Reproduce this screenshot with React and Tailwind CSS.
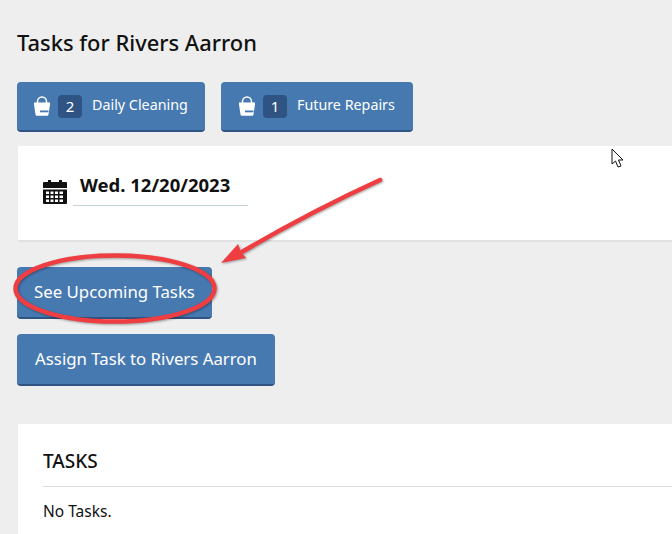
const FONT = { fontFamily: '"Noto Sans", "Open Sans", sans-serif' };

function BucketIcon() {
  return (
    <svg width="16" height="20" viewBox="0 0 16 20" className="shrink-0">
      <path d="M3.5 7V5.5a4.5 4.5 0 0 1 9 0V7" fill="none" stroke="#fff" strokeWidth="1.5" />
      <path d="M0 6.5h16v2l-1.5 10a1.5 1.5 0 0 1-1.5 1.3H3a1.5 1.5 0 0 1-1.5-1.3L0 8.5z" fill="#fff" />
      <rect x="6" y="14.5" width="8.5" height="1.8" fill="#4779b1" />
    </svg>
  );
}

function CalendarIcon() {
  return (
    <svg width="24" height="25" viewBox="0 0 24 25" className="shrink-0">
      <path d="M1 3h4V1h3v2h8V1h3v2h4a1 1 0 0 1 1 1v5H0V4a1 1 0 0 1 1-1z" fill="#111" />
      <path fillRule="evenodd" d="M0 10.5h24V24a1 1 0 0 1-1 1H1a1 1 0 0 1-1-1z
        M3 12.5v2.5h3v-2.5z M7.5 12.5v2.5h3v-2.5z M12 12.5v2.5h3v-2.5z M16.5 12.5v2.5h3.5v-2.5z
        M3 16.5v2.5h3v-2.5z M7.5 16.5v2.5h3v-2.5z M12 16.5v2.5h3v-2.5z M16.5 16.5v2.5h3.5v-2.5z
        M3 20.5v2.5h3v-2.5z M7.5 20.5v2.5h3v-2.5z M12 20.5v2.5h3v-2.5z M16.5 20.5v2.5h3.5v-2.5z" fill="#111" />
    </svg>
  );
}

function CategoryButton({ count, label, className }) {
  return (
    <button className={"flex h-[50px] items-center rounded border-b-2 border-[#2f5382] bg-[#4779b1] text-white " + className}>
      <BucketIcon />
      <span className="ml-2 flex h-[23px] w-6 items-center justify-center rounded bg-[#2f5382] text-[15px]">{count}</span>
      <span className="ml-[10px] pb-[3px] text-[14.3px]">{label}</span>
    </button>
  );
}

function ActionButton({ label, className }) {
  return (
    <button className={"block h-[52px] rounded border-b-2 border-[#2f5382] bg-[#4779b1] text-center text-[16.8px] text-white " + className}>
      {label}
    </button>
  );
}

export default function App() {
  return (
    <div className="relative h-[534px] w-[672px] overflow-hidden bg-[#eeeeee] text-[#111]" style={FONT}>
      <div className="pl-[17px] pt-[29px]">
        <h1 className="h-[28px] text-[21.9px] font-medium leading-[28px]">Tasks for Rivers Aarron</h1>

        <div className="mt-[25px] flex gap-4">
          <CategoryButton count="2" label="Daily Cleaning" className="w-[188px] pl-[17px]" />
          <CategoryButton count="1" label="Future Repairs" className="w-[192px] pl-[18px]" />
        </div>

        {/* DATE */}
        <div className="ml-px mt-[14px] flex h-[96px] items-start border-b-2 border-[#e2e2e2] bg-white pl-[25px] pt-[33px]">
          <CalendarIcon />
          <div className="ml-[6px] -mt-[10px] h-[37px] w-[175px] border-b border-[#c5d3da] pl-[7px] text-[18.5px] font-bold leading-[32px]">
            Wed. 12/20/2023
          </div>
        </div>

        <ActionButton label="See Upcoming Tasks" className="mt-[25px] w-[195px]" />
        <ActionButton label="Assign Task to Rivers Aarron" className="mt-[15px] w-[258px]" />

        {/* TASKS */}
        <div className="ml-px mt-[38px] h-[110px] bg-white pl-[25px] pt-[25px]">
          <h2 className="h-[38px] border-b border-[#dddddd] text-[19px] font-medium leading-[24px]">TASKS</h2>
          <p className="mt-[14px] text-[15.5px] leading-[20px]">No Tasks.</p>
        </div>
      </div>

      {/* annotation */}
      <svg width="672" height="534" className="pointer-events-none absolute left-0 top-0">
        <g className="drop-shadow-[1px_1px_1px_rgba(0,0,0,0.35)]">
          <ellipse cx="115" cy="288.5" rx="99.5" ry="33" fill="none" stroke="#ef3e42" strokeWidth="4.5" />
          <path d="M380 180 Q 310 212 240 253" fill="none" stroke="#ef3e42" strokeWidth="4.5" strokeLinecap="round" />
          <path d="M221 263 L238 244 L241 252 L246 258 Z" fill="#ef3e42" />
        </g>
        <path d="M612 149 V164 L615.5 161 L618 167 L621 166 L618.5 160 L623 160 Z" fill="#fff" stroke="#111" strokeWidth="1" />
      </svg>
    </div>
  );
}
